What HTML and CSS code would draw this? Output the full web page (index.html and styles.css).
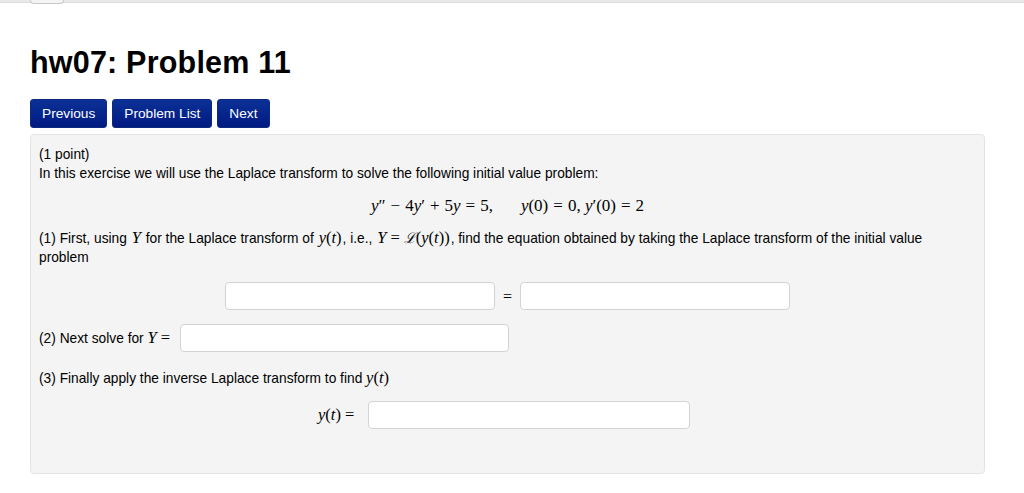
FILE: index.html
```html
<!DOCTYPE html>
<html>
<head>
<meta charset="utf-8">
<link rel="stylesheet" href="styles.css">
</head>
<body>
<div class="topbar"><div class="tab"></div></div>
<div class="page">
  <h1 class="title">hw07: Problem 11</h1>
  <div class="nav">
    <a class="btn">Previous</a>
    <a class="btn">Problem List</a>
    <a class="btn">Next</a>
  </div>
  <div class="well">
    <div class="para"><span>(1 point)</span><br><span>In this exercise we will use the Laplace transform to solve the following initial value problem:</span></div>
    <div class="display math"><i>y</i>″<span class="op">−</span>4<i>y</i>′<span class="op">+</span>5<i>y</i><span class="op">=</span>5,<span class="sp"></span><i>y</i>(0)<span class="op">=</span>0, <i>y</i>′(0)<span class="op">=</span>2</div>
    <div class="para p1">(1) First, using <span class="math"><i>Y</i></span> for the Laplace transform of <span class="math"><i>y</i>(<i>t</i>)</span>, i.e., <span class="math"><i>Y</i><span class="op">=</span><span class="cal">ℒ</span>(<i>y</i>(<i>t</i>))</span>, find the equation obtained by taking the Laplace transform of the initial value<br>problem</div>
    <div class="eqrow">
      <span class="input w270"></span>
      <span class="eq">=</span>
      <span class="input w270"></span>
    </div>
    <div class="row2"><span>(2) Next solve for <span class="math"><i>Y</i><span class="op">=</span></span></span><span class="input w328"></span></div>
    <div class="para p3">(3) Finally apply the inverse Laplace transform to find <span class="math"><i>y</i>(<i>t</i>)</span></div>
    <div class="row3"><span class="math"><i>y</i>(<i>t</i>)<span class="op">=</span></span><span class="input w322"></span></div>
  </div>
</div>
</body>
</html>
```
FILE: styles.css
```css
html, body { margin: 0; padding: 0; background: #fff; }
body { font-family: "Liberation Sans", Arial, sans-serif; color: #000; }
.topbar { height: 2px; background: #e8e8e8; border-bottom: 1px solid #dcdcdc; position: relative; }
.tab { position: absolute; left: 30px; top: 0; width: 32px; height: 3px; background: #f4f4f4; border: 1px solid #c8c8c8; border-top: none; border-radius: 0 0 4px 4px; }
.page { padding: 0 39px 0 30px; }
.title { margin: 0; padding-top: 41px; font-size: 30.5px; line-height: 36px; font-weight: bold; letter-spacing: 0.2px; }
.nav { display: flex; gap: 5px; margin-top: 19px; }
.btn { display: inline-block; height: 29px; line-height: 28px; box-sizing: border-box; padding: 0 11px; color: #fff; font-size: 13.7px; border-radius: 3px; background: linear-gradient(#0b3196, #011a82); border: 1px solid #0c2a80; }
.well { margin-top: 6px; background: #f4f4f4; border: 1px solid #e3e3e3; border-radius: 4px; box-sizing: border-box; height: 340px; padding: 10px 8px 0 8px; font-size: 13.75px; line-height: 19px; }
.display { text-align: center; margin-top: 13px; line-height: 20px; }
.math { font-family: "Liberation Serif", "Times New Roman", serif; font-size: 16.5px; line-height: 1; }
.display.math { font-size: 17px; line-height: 20px; }
.op { padding: 0 4px; }
.display .op { padding: 0 5px; }
.sp { display: inline-block; width: 28px; }
.cal { font-family: "DejaVu Serif", serif; font-style: italic; font-size: 14.5px; }
.p1 { margin-top: 13px; }
.p1 .math { padding: 0 1px; }
.eqrow { display: flex; align-items: center; justify-content: center; gap: 8px; margin-top: 15px; }
.eq { font-family: "Liberation Serif", serif; font-size: 16px; }
.input { display: inline-block; height: 28px; box-sizing: border-box; background: #fff; border: 1px solid #d3d3d3; border-radius: 4px; }
.w270 { width: 270px; }
.w328 { width: 329px; }
.w322 { width: 322px; }
.row2 { margin-top: 14px; display: flex; align-items: center; gap: 6px; }
.p3 { margin-top: 17px; }
.row3 { margin-top: 13px; display: flex; align-items: center; padding-left: 279px; gap: 10px; }
```
